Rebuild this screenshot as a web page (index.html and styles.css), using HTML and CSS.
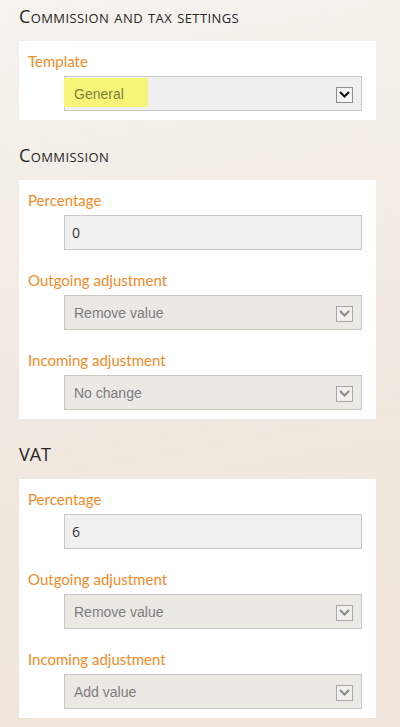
FILE: index.html
```html
<!DOCTYPE html>
<html lang="en">
<head>
    <meta charset="UTF-8">
    <meta name="viewport" content="width=device-width, initial-scale=1.0">
    <title>Commission and tax settings</title>
    <link rel="stylesheet" href="styles.css">
</head>
<body>
    <div class="page">
        <h2 class="section-title">Commission and tax settings</h2>
        <div class="card">
            <div class="field">
                <label class="field-label">Template</label>
                <div class="select">
                    <span class="highlight"></span>
                    <span class="select-text enabled">General</span>
                    <span class="arrow-btn">
                        <svg width="11" height="7" viewBox="0 0 11 7"><path d="M1 1 L5.5 5.5 L10 1" fill="none" stroke="#111" stroke-width="2"/></svg>
                    </span>
                </div>
            </div>
        </div>

        <h2 class="section-title">Commission</h2>
        <div class="card">
            <div class="field">
                <label class="field-label">Percentage</label>
                <div class="input">0</div>
            </div>
            <div class="field">
                <label class="field-label">Outgoing adjustment</label>
                <div class="select disabled">
                    <span class="select-text">Remove value</span>
                    <span class="arrow-btn">
                        <svg width="11" height="7" viewBox="0 0 11 7"><path d="M1 1 L5.5 5.5 L10 1" fill="none" stroke="#8a8a8a" stroke-width="2"/></svg>
                    </span>
                </div>
            </div>
            <div class="field">
                <label class="field-label">Incoming adjustment</label>
                <div class="select disabled">
                    <span class="select-text">No change</span>
                    <span class="arrow-btn">
                        <svg width="11" height="7" viewBox="0 0 11 7"><path d="M1 1 L5.5 5.5 L10 1" fill="none" stroke="#8a8a8a" stroke-width="2"/></svg>
                    </span>
                </div>
            </div>
        </div>

        <h2 class="section-title vat">VAT</h2>
        <div class="card">
            <div class="field">
                <label class="field-label">Percentage</label>
                <div class="input">6</div>
            </div>
            <div class="field">
                <label class="field-label">Outgoing adjustment</label>
                <div class="select disabled">
                    <span class="select-text">Remove value</span>
                    <span class="arrow-btn">
                        <svg width="11" height="7" viewBox="0 0 11 7"><path d="M1 1 L5.5 5.5 L10 1" fill="none" stroke="#8a8a8a" stroke-width="2"/></svg>
                    </span>
                </div>
            </div>
            <div class="field">
                <label class="field-label">Incoming adjustment</label>
                <div class="select disabled">
                    <span class="select-text">Add value</span>
                    <span class="arrow-btn">
                        <svg width="11" height="7" viewBox="0 0 11 7"><path d="M1 1 L5.5 5.5 L10 1" fill="none" stroke="#8a8a8a" stroke-width="2"/></svg>
                    </span>
                </div>
            </div>
        </div>
    </div>
</body>
</html>
```

FILE: styles.css
```css
html, body {
    margin: 0;
    min-height: 100%;
}
body {
    font-family: 'Open Sans', sans-serif;
    background: linear-gradient(170deg, #f6f2ed 0%, #f1e9e1 50%, #efe5dc 100%);
    min-height: 727px;
}
.page {
    padding: 5px 24px 0 19px;
}
.section-title {
    margin: 0 0 14px;
    font-size: 18px;
    line-height: 22px;
    font-weight: normal;
    font-variant: small-caps;
    letter-spacing: 0.4px;
    color: #262626;
}
.card + .section-title {
    margin-top: 24px;
}
.section-title.vat {
    font-variant: normal;
    letter-spacing: 0;
}
.card {
    background-color: #fff;
    padding: 10px 14px 9px 9px;
    display: flex;
    flex-direction: column;
    gap: 20px;
}
.field {
    display: flex;
    flex-direction: column;
}
.field-label {
    font-family: 'Lato', sans-serif;
    font-size: 15px;
    line-height: 20px;
    color: #f08b27;
    margin-bottom: 5px;
}
.input, .select {
    margin-left: 36px;
    height: 35px;
    box-sizing: border-box;
    display: flex;
    align-items: center;
}
.input {
    background-color: #eff0ef;
    border: 1px solid #c7c8c7;
    padding-left: 7px;
    font-size: 14px;
    color: #333;
}
.select {
    position: relative;
    background-color: #efefef;
    border: 1px solid #c9c9c9;
    padding: 0 8px 0 9px;
}
.select.disabled {
    background-color: #ebe9e3;
    border-color: #cac8c2;
}
.select-text {
    position: relative;
    flex: 1;
    font-family: 'Liberation Sans', Arial, sans-serif;
    font-size: 14px;
    color: #7c7c7c;
}
.select-text.enabled {
    color: #80803c;
}
.highlight {
    position: absolute;
    left: -1px;
    top: 1px;
    width: 84px;
    height: 29px;
    background-color: #f6f578;
}
.arrow-btn {
    width: 17px;
    height: 16px;
    box-sizing: border-box;
    border: 1px solid #8e8e8e;
    background-color: #f4f4f4;
    display: flex;
    align-items: center;
    justify-content: center;
    margin-top: 2px;
}
.select.disabled .arrow-btn {
    border-color: #a8a8a8;
    background-color: #f0efec;
}
```
